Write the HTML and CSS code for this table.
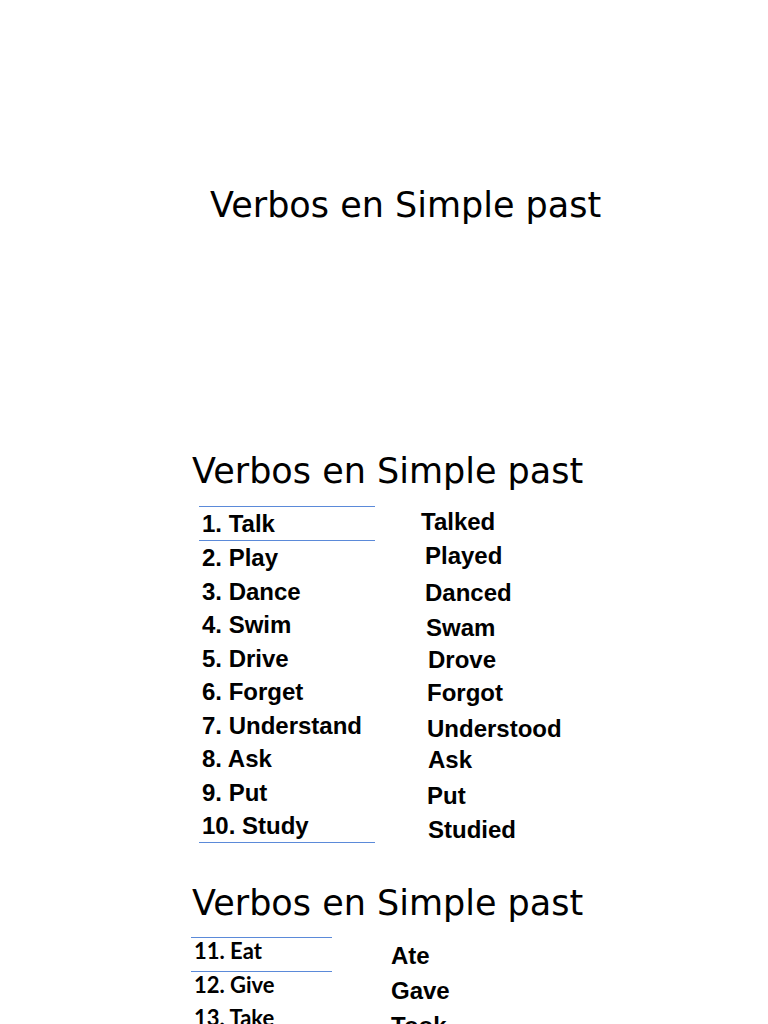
FILE: index.html
```html
<!DOCTYPE html>
<html lang="es">
<head>
<meta charset="utf-8">
<title>Verbos en Simple past</title>
<link rel="stylesheet" href="styles.css">
</head>
<body>
<main class="doc">
  <section class="slide slide-cover">
    <h1 class="title">Verbos en Simple past</h1>
  </section>

  <section class="slide slide-list">
    <h2 class="title">Verbos en Simple past</h2>
    <div class="pairs">
      <ol class="base">
        <li>1. Talk</li>
        <li>2. Play</li>
        <li>3. Dance</li>
        <li>4. Swim</li>
        <li>5. Drive</li>
        <li>6. Forget</li>
        <li>7. Understand</li>
        <li>8. Ask</li>
        <li>9. Put</li>
        <li>10. Study</li>
      </ol>
      <ul class="past">
        <li>Talked</li>
        <li>Played</li>
        <li>Danced</li>
        <li>Swam</li>
        <li>Drove</li>
        <li>Forgot</li>
        <li>Understood</li>
        <li>Ask</li>
        <li>Put</li>
        <li>Studied</li>
      </ul>
    </div>
  </section>

  <section class="slide slide-list slide-list-b">
    <h2 class="title">Verbos en Simple past</h2>
    <div class="pairs">
      <ol class="base">
        <li>11. Eat</li>
        <li>12. Give</li>
        <li>13. Take</li>
      </ol>
      <ul class="past">
        <li>Ate</li>
        <li>Gave</li>
        <li>Took</li>
      </ul>
    </div>
  </section>
</main>
</body>
</html>
```

FILE: styles.css
```css
html, body {
  margin: 0;
  padding: 0;
  background: #ffffff;
  color: #000000;
}

.doc {
  width: 768px;
}

.slide {
  height: 432px;
  box-sizing: border-box;
  overflow: hidden;
}

.title {
  margin: 0;
  font-family: "DejaVu Sans", sans-serif;
  font-weight: normal;
  font-size: 35px;
  line-height: 40px;
  white-space: nowrap;
}

.slide-cover {
  padding: 185px 0 0 210px;
}

.slide-list {
  padding: 19px 0 0 192px;
}

.slide-list .title {
  margin-bottom: 15px;
}

.pairs {
  display: grid;
  grid-template-columns: 176px auto;
  column-gap: 46px;
  margin-left: 7px;
  align-items: start;
}

.base, .past {
  list-style: none;
  margin: 0;
  padding: 0;
  font-family: "Liberation Sans", Arial, sans-serif;
  font-weight: bold;
  font-size: 24px;
  white-space: nowrap;
}

.base li {
  line-height: 33.5px;
  padding-left: 3px;
}

.base li:first-child {
  line-height: 33px;
  border-top: 1px solid #5b8ad9;
  border-bottom: 1px solid #5b8ad9;
}

.base li:last-child {
  line-height: 33px;
  border-bottom: 1px solid #5b8ad9;
}

.past {
  display: flex;
  flex-direction: column;
}

.past li {
  line-height: 24px;
}

.past li:nth-child(1) { margin-top: 4px; padding-left: 0; }
.past li:nth-child(2) { margin-top: 10px; padding-left: 4px; }
.past li:nth-child(3) { margin-top: 13px; padding-left: 4px; }
.past li:nth-child(4) { margin-top: 11px; padding-left: 5px; }
.past li:nth-child(5) { margin-top: 8px; padding-left: 7px; }
.past li:nth-child(6) { margin-top: 9px; padding-left: 6px; }
.past li:nth-child(7) { margin-top: 12px; padding-left: 6px; }
.past li:nth-child(8) { margin-top: 7px; padding-left: 7px; }
.past li:nth-child(9) { margin-top: 12px; padding-left: 6px; }
.past li:nth-child(10) { margin-top: 10px; padding-left: 7px; }

/* third slide */
.slide-list-b .title {
  margin-bottom: 14px;
}

.slide-list-b .pairs {
  grid-template-columns: 141px auto;
  column-gap: 59px;
  margin-left: -1px;
}

.slide-list-b .base {
  font-family: "Lato", "Open Sans", sans-serif;
  font-size: 22px;
}

.slide-list-b .base li,
.slide-list-b .base li:first-child,
.slide-list-b .base li:last-child {
  height: 33px;
  line-height: 25px;
  padding-left: 3px;
}

.slide-list-b .base li:last-child {
  border-bottom: none;
}

.slide-list-b .past li:nth-child(1) { margin-top: 7px; padding-left: 0; }
.slide-list-b .past li:nth-child(2) { margin-top: 11px; padding-left: 0; }
.slide-list-b .past li:nth-child(3) { margin-top: 11px; padding-left: 0; }
```
